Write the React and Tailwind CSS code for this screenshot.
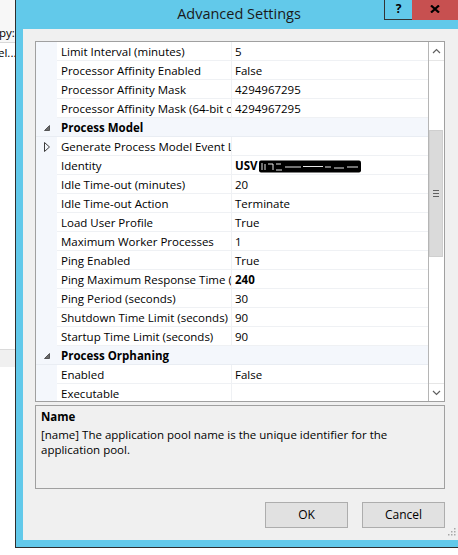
import React from 'react';

const rows = [
  { name: 'Limit Interval (minutes)', value: '5' },
  { name: 'Processor Affinity Enabled', value: 'False' },
  { name: 'Processor Affinity Mask', value: '4294967295' },
  { name: 'Processor Affinity Mask (64-bit option)', value: '4294967295' },
  { name: 'Process Model', category: true },
  { name: 'Generate Process Model Event Log Entry', expand: true },
  { name: 'Identity', value: 'USV', bold: true, redacted: true },
  { name: 'Idle Time-out (minutes)', value: '20' },
  { name: 'Idle Time-out Action', value: 'Terminate' },
  { name: 'Load User Profile', value: 'True' },
  { name: 'Maximum Worker Processes', value: '1' },
  { name: 'Ping Enabled', value: 'True' },
  { name: 'Ping Maximum Response Time (seconds)', value: '240', bold: true },
  { name: 'Ping Period (seconds)', value: '30' },
  { name: 'Shutdown Time Limit (seconds)', value: '90' },
  { name: 'Startup Time Limit (seconds)', value: '90' },
  { name: 'Process Orphaning', category: true },
  { name: 'Enabled', value: 'False' },
  { name: 'Executable', value: '' },
];

function CollapseGlyph() {
  return (
    <svg width="6" height="6" viewBox="0 0 6 6">
      <polygon points="5.5,0.5 5.5,5.5 0.5,5.5" fill="#6b6b6b" stroke="#3c3c3c" strokeWidth="0.8" />
    </svg>
  );
}

function ExpandGlyph() {
  return (
    <svg width="6" height="10" viewBox="0 0 6 10">
      <polygon points="0.5,0.5 5.5,5 0.5,9.5" fill="none" stroke="#3c3c3c" strokeWidth="1" />
    </svg>
  );
}

function Redaction() {
  return (
    <svg width="102" height="13" viewBox="0 0 102 13" className="ml-[1px] shrink-0">
      <rect x="0" y="0.5" width="102" height="12" rx="2" fill="#000" />
      <path d="M3 3v7M6 4v6M9 4h5v6M17 4h5M17 10h6" stroke="#fff" strokeWidth="0.9" />
      <path d="M26 7h16M44 6.5h20M66 7h6M75 8h10M88 7h11" stroke="#fff" strokeWidth="0.9" />
    </svg>
  );
}

function Chevron({ down }) {
  return (
    <svg width="9" height="6" viewBox="0 0 9 6">
      <polyline
        points={down ? '1,1 4.5,4.5 8,1' : '1,5 4.5,1.5 8,5'}
        fill="none"
        stroke="#606060"
        strokeWidth="1.2"
      />
    </svg>
  );
}

function Row({ row }) {
  if (row.category) {
    return (
      <div className="flex h-[19px] bg-[#f4f7fc] border-b border-[#e9edf3]">
        <div className="w-[21px] flex items-center justify-center pl-[1px] pt-[1px]">
          <CollapseGlyph />
        </div>
        <div className="pl-[4px] pt-[1px] leading-[18px] font-bold whitespace-nowrap">{row.name}</div>
      </div>
    );
  }
  return (
    <div className="flex h-[19px]">
      <div className="w-[21px] shrink-0 bg-[#f4f7fc] flex items-center justify-center pl-[1px] pt-[1px]">
        {row.expand && <ExpandGlyph />}
      </div>
      <div className="w-[175px] shrink-0 pl-[4px] pt-[1px] leading-[18px] border-b border-r border-[#eff1f4] overflow-hidden whitespace-nowrap">
        {row.name}
      </div>
      <div
        className={
          'flex-1 pl-[3px] pt-[1px] leading-[18px] flex items-start border-b border-[#eff1f4] overflow-hidden whitespace-nowrap ' +
          (row.bold ? 'font-bold' : '')
        }
      >
        <span>{row.value}</span>
        {row.redacted && (
          <span className="pt-[3px]">
            <Redaction />
          </span>
        )}
      </div>
    </div>
  );
}

function ResizeGrip() {
  const dots = [
    [6, 0],
    [6, 3],
    [3, 3],
    [6, 6],
    [3, 6],
    [0, 6],
  ];
  return (
    <svg width="8" height="8" viewBox="0 0 8 8">
      {dots.map(([x, y], i) => (
        <rect key={i} x={x} y={y} width="1.5" height="1.5" fill="#a8a8a8" />
      ))}
    </svg>
  );
}

export default function App() {
  return (
    <div
      className="w-[458px] h-[555px] overflow-hidden bg-white flex text-[11.5px] text-black"
      style={{ fontFamily: '"Open Sans", "Noto Sans", sans-serif' }}
    >
      {/* window behind */}
      <div className="w-[15px] shrink-0 flex flex-col overflow-hidden">
        <div className="h-[43px] bg-[#f7f7f7] border-b border-[#d9d9d9] flex items-end pb-[1px] -ml-[1px] whitespace-nowrap">
          py:
        </div>
        <div className="h-[20px] flex items-center -ml-[2px] whitespace-nowrap">el...</div>
        <div className="h-[286px]" />
        <div className="h-[18px] bg-[#f0f0f0] border-t border-[#dadada]" />
      </div>

      {/* dialog */}
      <div className="w-[451px] shrink-0 h-[548px] border-l border-b border-[#2e2e2e] bg-[#62c9ea] flex flex-col">
        {/* title bar */}
        <div className="h-[29px] shrink-0 relative flex items-center justify-center">
          <span className="text-[14.5px] text-[#1a1a1a] pb-[2px] mr-[4px]">Advanced Settings</span>
          <div className="absolute top-0 left-[368px] flex">
            <div className="w-[29px] h-[20px] border-l border-r border-b border-[#333] flex items-center justify-center font-bold text-[12px] leading-none pb-[2px]">
              ?
            </div>
            <div className="w-[46px] h-[20px] bg-[#c75050] flex items-center justify-center pb-[2px] -ml-[1px]">
              <svg width="10" height="8" viewBox="0 0 10 8">
                <path d="M1 0.5L9 7.5M9 0.5L1 7.5" stroke="#000" strokeWidth="2.2" />
              </svg>
            </div>
          </div>
        </div>

        {/* client area */}
        <div className="ml-[7px] mr-[8px] h-[511px] bg-[#f0f0f0] relative pt-[12px] pl-[12px] pr-[13px] flex flex-col">
          {/* property grid */}
          <div className="h-[361px] border border-[#a0a0a0] bg-white flex overflow-hidden">
            <div className="flex-1 flex flex-col overflow-hidden">
              {rows.map((row, i) => (
                <Row key={i} row={row} />
              ))}
            </div>
            <div className="w-[16px] shrink-0 border-l border-[#b5b5b5] flex flex-col">
              <div className="h-[19px] border-b border-[#e6e6e6] flex items-center justify-center">
                <Chevron />
              </div>
              <div className="h-[69px]" />
              <div className="h-[127px] bg-[#dadada] border border-[#cfcfcf] flex flex-col items-center justify-center gap-[2px] mr-[1px]">
                <div className="w-[6px] h-[1px] bg-[#606060]" />
                <div className="w-[6px] h-[1px] bg-[#606060]" />
                <div className="w-[6px] h-[1px] bg-[#606060]" />
              </div>
              <div className="flex-1" />
              <div className="h-[18px] border-t border-[#e6e6e6] flex items-center justify-center">
                <Chevron down />
              </div>
            </div>
          </div>

          {/* description */}
          <div className="mt-[3px] h-[84px] border border-[#a0a0a0] bg-[#f0f0f0] px-[5px] pt-[3px] leading-[15px]">
            <div className="font-bold">Name</div>
            <div className="mt-[3px]">
              [name] The application pool name is the unique identifier for the application pool.
            </div>
          </div>

          {/* buttons */}
          <div className="mt-[13px] flex justify-end gap-[14px]">
            <button className="w-[83px] h-[26px] bg-[#e1e1e1] border border-[#adadad] text-[12px]">OK</button>
            <button className="w-[83px] h-[26px] bg-[#e1e1e1] border border-[#adadad] text-[12px]">Cancel</button>
          </div>

          <div className="absolute right-[2px] bottom-[4px]">
            <ResizeGrip />
          </div>
        </div>
      </div>
    </div>
  );
}
